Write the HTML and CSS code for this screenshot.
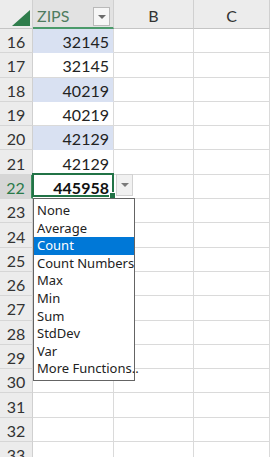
FILE: index.html
```html
<!DOCTYPE html>
<html lang="en">
<head>
    <meta charset="UTF-8">
    <meta name="viewport" content="width=device-width, initial-scale=1.0">
    <title>ZIPS - Total Row</title>
    <link rel="stylesheet" href="styles.css">
</head>
<body>
    <div class="sheet">
        <div class="row head">
            <div class="corner"><span class="select-all"></span></div>
            <div class="colhead active">ZIPS <span class="filter-btn"><span class="arrow"></span></span></div>
            <div class="colhead center">B</div>
            <div class="colhead center">C</div>
        </div>
        <div class="row"><div class="rh">16</div><div class="cell num band">32145</div><div class="cell"></div><div class="cell"></div></div>
        <div class="row"><div class="rh">17</div><div class="cell num">32145</div><div class="cell"></div><div class="cell"></div></div>
        <div class="row"><div class="rh">18</div><div class="cell num band">40219</div><div class="cell"></div><div class="cell"></div></div>
        <div class="row"><div class="rh">19</div><div class="cell num">40219</div><div class="cell"></div><div class="cell"></div></div>
        <div class="row"><div class="rh">20</div><div class="cell num band">42129</div><div class="cell"></div><div class="cell"></div></div>
        <div class="row"><div class="rh">21</div><div class="cell num">42129</div><div class="cell"></div><div class="cell"></div></div>
        <div class="row"><div class="rh active">22</div><div class="cell num total">445958</div><div class="cell"></div><div class="cell"></div></div>
        <div class="row"><div class="rh">23</div><div class="cell"></div><div class="cell"></div><div class="cell"></div></div>
        <div class="row"><div class="rh">24</div><div class="cell"></div><div class="cell"></div><div class="cell"></div></div>
        <div class="row"><div class="rh">25</div><div class="cell"></div><div class="cell"></div><div class="cell"></div></div>
        <div class="row"><div class="rh">26</div><div class="cell"></div><div class="cell"></div><div class="cell"></div></div>
        <div class="row"><div class="rh">27</div><div class="cell"></div><div class="cell"></div><div class="cell"></div></div>
        <div class="row"><div class="rh">28</div><div class="cell"></div><div class="cell"></div><div class="cell"></div></div>
        <div class="row"><div class="rh">29</div><div class="cell"></div><div class="cell"></div><div class="cell"></div></div>
        <div class="row"><div class="rh">30</div><div class="cell"></div><div class="cell"></div><div class="cell"></div></div>
        <div class="row"><div class="rh">31</div><div class="cell"></div><div class="cell"></div><div class="cell"></div></div>
        <div class="row"><div class="rh">32</div><div class="cell"></div><div class="cell"></div><div class="cell"></div></div>
        <div class="row"><div class="rh">33</div><div class="cell"></div><div class="cell"></div><div class="cell"></div></div>

        <!-- selection box on A22 with fill handle -->
        <div class="selection"><span class="fill-handle"></span></div>

        <!-- total row dropdown -->
        <div class="cell-dropdown"><span class="arrow"></span></div>
        <ul class="fn-list">
            <li>None</li>
            <li>Average</li>
            <li class="selected">Count</li>
            <li>Count Numbers</li>
            <li>Max</li>
            <li>Min</li>
            <li>Sum</li>
            <li>StdDev</li>
            <li>Var</li>
            <li>More Functions..</li>
        </ul>
    </div>
</body>
</html>
```

FILE: styles.css
```css
body {
    margin: 0;
    padding: 0;
    background: #fff;
    font-family: Lato, "Noto Sans", sans-serif;
    color: #222;
    overflow: hidden;
}

.sheet {
    position: relative;
    width: 270px;
    height: 457px;
    overflow: hidden;
}

.row {
    display: grid;
    grid-template-columns: 33px 81px 80px 76px;
    height: 24.3px;
}

.row.head {
    height: 29px;
}

.corner,
.colhead {
    background: #ececec;
    border-right: 1px solid #d0d0d0;
    border-bottom: 1px solid #c4c4c4;
    box-sizing: border-box;
}

.corner {
    position: relative;
}

.select-all {
    position: absolute;
    right: 2px;
    bottom: 2px;
    width: 0;
    height: 0;
    border-left: 18px solid transparent;
    border-bottom: 16px solid #2f7d4c;
}

.colhead {
    position: relative;
    display: flex;
    align-items: center;
    padding: 3px 0 0 4px;
    font-size: 16px;
    color: #333;
}

    .colhead.center {
        justify-content: center;
        padding-left: 0;
    }

    .colhead.active {
        background: #e2e2e2;
        color: #4f7c60;
        border-bottom: 2px solid #4b9a6a;
    }

.filter-btn {
    position: absolute;
    right: 3px;
    top: 7px;
    width: 17px;
    height: 19px;
    box-sizing: border-box;
    background: #f6f6f6;
    border: 1px solid #b9b9b9;
    display: flex;
    align-items: center;
    justify-content: center;
}

.arrow {
    width: 0;
    height: 0;
    border-left: 4px solid transparent;
    border-right: 4px solid transparent;
    border-top: 4px solid #6a6a6a;
}

.rh {
    background: #ececec;
    border-right: 1px solid #d0d0d0;
    border-bottom: 1px solid #d6d6d6;
    box-sizing: border-box;
    display: flex;
    align-items: center;
    justify-content: center;
    padding-top: 2px;
    font-size: 16px;
    color: #333;
}

    .rh.active {
        background: #d6d6d6;
        color: #2a7a4a;
        border-right: 2px solid #3c8d5c;
    }

.cell {
    border-right: 1px solid #dadada;
    border-bottom: 1px solid #dadada;
    box-sizing: border-box;
    font-size: 16px;
}

    .cell.num {
        display: flex;
        align-items: center;
        justify-content: flex-end;
        padding: 2px 4px 0 0;
    }

    .cell.band {
        background: #d9e1f2;
        border-bottom-color: #d9e1f2;
    }

    .cell.total {
        font-weight: bold;
        color: #111;
    }

.selection {
    position: absolute;
    left: 32px;
    top: 173px;
    width: 82px;
    height: 24px;
    box-sizing: border-box;
    border: 2px solid #217346;
}

.fill-handle {
    position: absolute;
    right: -4px;
    bottom: -4px;
    width: 5px;
    height: 5px;
    background: #217346;
    border: 1px solid #fff;
}

.cell-dropdown {
    position: absolute;
    left: 116px;
    top: 174px;
    width: 17px;
    height: 22px;
    box-sizing: border-box;
    background: #f1f1f1;
    border: 1px solid #d2d2d2;
    display: flex;
    align-items: center;
    justify-content: center;
}

    .cell-dropdown .arrow {
        border-top-color: #7a7a7a;
    }

.fn-list {
    position: absolute;
    left: 33px;
    top: 198px;
    width: 102px;
    margin: 0;
    padding: 3px 0 2px;
    list-style: none;
    box-sizing: border-box;
    background: #fff;
    border: 1px solid #646464;
    font-family: "Noto Sans", sans-serif;
    font-size: 13px;
    color: #222;
}

    .fn-list li {
        height: 17.6px;
        line-height: 17.6px;
        padding-left: 3px;
        white-space: nowrap;
    }

    .fn-list li.selected {
        background: #0078d7;
        color: #fff;
    }
```
